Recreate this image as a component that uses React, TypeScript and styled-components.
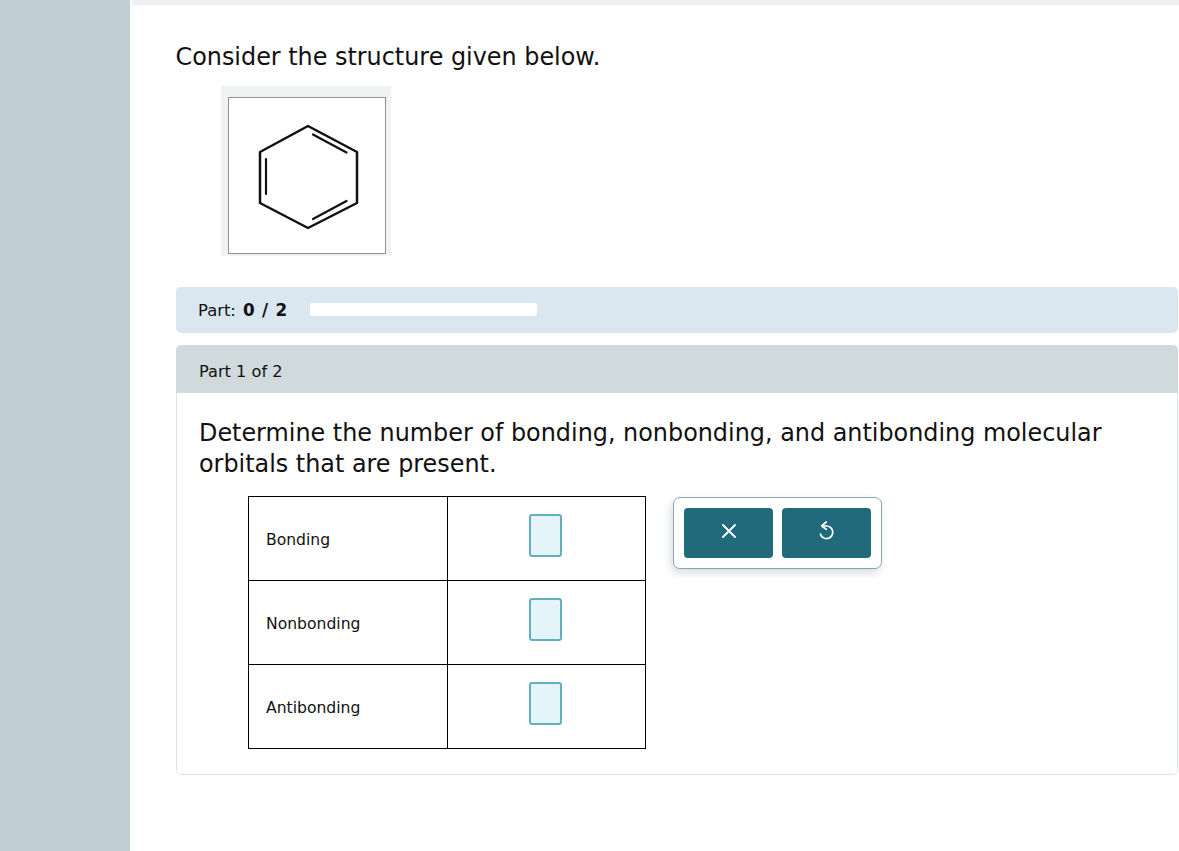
import React from "react";
import styled, { createGlobalStyle } from "styled-components";

const Global = createGlobalStyle`
  html, body { margin: 0; padding: 0; background: #fff; }
  body { font-family: "DejaVu Sans", Verdana, sans-serif; color: #111; }
`;

const Page = styled.div`
  display: flex;
  min-height: 851px;
  overflow: hidden;
`;
const Sidebar = styled.aside`
  width: 130px;
  flex: none;
  background: #c0ced4;
`;
const Main = styled.main`
  flex: 1;
  min-width: 0;
  display: flex;
  flex-direction: column;
`;
const TopStrip = styled.div`
  height: 5px;
  margin-left: 2px;
  background: #edf1f2;
`;
const Content = styled.div`
  padding: 35px 1px 0 46px;
  display: flex;
  flex-direction: column;
`;
const Heading = styled.p`
  margin: 0 0 0 -0.5px;
  font-size: 23.88px;
  line-height: 34px;
`;
const FigureFrame = styled.div`
  width: 170px;
  height: 170px;
  box-sizing: border-box;
  margin: 12px 0 0 45px;
  padding: 11px 5px 2px 7px;
  background: #eff3f4;
`;
const FigureBox = styled.div`
  width: 158px;
  height: 157px;
  box-sizing: border-box;
  border: 1px solid #909090;
  background: #fff;
`;
const ProgressBar = styled.div`
  margin-top: 31px;
  height: 46px;
  box-sizing: border-box;
  padding: 0 22px;
  display: flex;
  align-items: center;
  background: #dae6f0;
  border-radius: 5px;
  font-size: 16.4px;
`;
const PartLabel = styled.span`
  width: 112px;
  flex: none;
  white-space: nowrap;
`;
const PartScore = styled.b`
  margin-left: 2px;
  word-spacing: 1.5px;
  font-size: 16.8px;
`;
const ProgressTrack = styled.div`
  width: 227px;
  height: 13px;
  margin-top: -1px;
  background: #fff;
  border-radius: 3px;
`;
const Card = styled.section`
  margin-top: 12px;
  height: 430px;
  border-radius: 5px;
  overflow: hidden;
`;
const CardHeader = styled.header`
  height: 48px;
  box-sizing: border-box;
  padding: 5px 23px 0;
  display: flex;
  align-items: center;
  background: #d0d9dc;
  font-size: 16.2px;
`;
const CardBody = styled.div`
  height: 382px;
  box-sizing: border-box;
  padding: 25px 22px 0;
  border: 1px solid #dce4e8;
  border-top: 0;
  border-radius: 0 0 5px 5px;
`;
const Question = styled.p`
  margin: 0;
  font-size: 23.88px;
  line-height: 31px;
`;
const AnswerRow = styled.div`
  display: flex;
  align-items: flex-start;
  margin: 16px 0 0 49px;
  gap: 27px;
`;
const Grid = styled.table`
  border-collapse: collapse;
  width: 398px;
  table-layout: fixed;
`;
const LabelCell = styled.td`
  height: 84px;
  box-sizing: border-box;
  padding: 2px 0 0 17px;
  border: 1px solid #000;
  font-size: 15.6px;
  vertical-align: middle;
`;
const InputCell = styled.td`
  box-sizing: border-box;
  padding: 0;
  border: 1px solid #000;
  vertical-align: middle;
`;
const Blank = styled.input`
  display: block;
  width: 33px;
  height: 43px;
  box-sizing: border-box;
  margin: 0 0 6px 81px;
  padding: 0;
  background: #e5f4f8;
  border: 2px solid #62afbf;
  border-radius: 3px;
`;
const Toolbox = styled.div`
  width: 209px;
  height: 72px;
  box-sizing: border-box;
  margin-top: 1px;
  padding: 10px;
  display: flex;
  gap: 9px;
  background: #fff;
  border: 1px solid #8ba6b1;
  border-radius: 7px;
  box-shadow: -2px 4px 8px rgba(70, 100, 115, 0.22);
`;
const ToolButton = styled.button`
  width: 89px;
  height: 50px;
  padding: 0 0 4px;
  display: flex;
  align-items: center;
  justify-content: center;
  background: #216a7c;
  border: 0;
  border-radius: 4px;
  color: #fff;
`;

const Benzene = () => (
  <svg width="156" height="155" viewBox="229 98 156 155" fill="none" stroke="#111" strokeWidth="2.5" strokeLinejoin="round" strokeLinecap="round" style={{ display: "block" }}>
    <path d="M308 126 L357 152 L357 203 L308 228 L260 203 L260 152 Z" />
    <path strokeWidth="2.2" d="M313 134.5 L346.5 152.5 M313 219 L346.5 201 M266 159 L266 194" />
  </svg>
);

const CloseIcon = () => (
  <svg width="14" height="14" viewBox="0 0 14 14" fill="none" stroke="currentColor" strokeWidth="1.8" strokeLinecap="round">
    <path d="M1 1 L13 13 M13 1 L1 13" />
  </svg>
);

const UndoIcon = () => (
  <svg width="16" height="20" viewBox="0 0 16 20" fill="none" stroke="currentColor" strokeWidth="1.7" strokeLinecap="round" strokeLinejoin="round">
    <path d="M7.2 1 L2.7 5 L7.2 8.3" />
    <path d="M2.7 5 H7.5 A6.3 6.3 0 1 1 1.4 13" />
  </svg>
);

const rows = ["Bonding", "Nonbonding", "Antibonding"];

export default function App() {
  return (
    <Page>
      <Global />
      <Sidebar />
      <Main>
        <TopStrip />
        <Content>
          <Heading>Consider the structure given below.</Heading>
          <FigureFrame>
            <FigureBox>
              <Benzene />
            </FigureBox>
          </FigureFrame>
          <ProgressBar>
            <PartLabel>
              Part: <PartScore>0 / 2</PartScore>
            </PartLabel>
            <ProgressTrack />
          </ProgressBar>
          <Card>
            <CardHeader>Part 1 of 2</CardHeader>
            <CardBody>
              <Question>
                Determine the number of bonding, nonbonding, and antibonding molecular orbitals that are present.
              </Question>
              <AnswerRow>
                <Grid>
                  <tbody>
                    {rows.map((r) => (
                      <tr key={r}>
                        <LabelCell>{r}</LabelCell>
                        <InputCell>
                          <Blank aria-label={r} />
                        </InputCell>
                      </tr>
                    ))}
                  </tbody>
                </Grid>
                <Toolbox>
                  <ToolButton aria-label="Clear">
                    <CloseIcon />
                  </ToolButton>
                  <ToolButton aria-label="Undo">
                    <UndoIcon />
                  </ToolButton>
                </Toolbox>
              </AnswerRow>
            </CardBody>
          </Card>
        </Content>
      </Main>
    </Page>
  );
}
